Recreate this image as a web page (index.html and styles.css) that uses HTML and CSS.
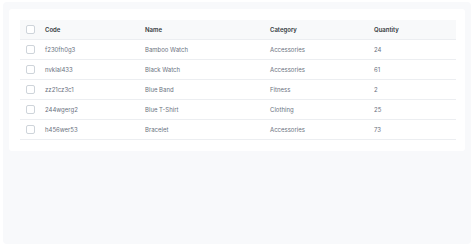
FILE: index.html
```html
<!DOCTYPE html>
<html>
<head>
<meta charset="utf-8">
<link rel="stylesheet" href="styles.css">
</head>
<body>
<div class="page">
  <div class="card">
    <table class="grid">
      <colgroup>
        <col class="c-check"><col class="c-code"><col class="c-name"><col class="c-cat"><col class="c-qty">
      </colgroup>
      <thead>
        <tr><th><span class="box"></span></th><th>Code</th><th>Name</th><th>Category</th><th>Quantity</th></tr>
      </thead>
      <tbody>
        <tr><td><span class="box"></span></td><td>f230fh0g3</td><td>Bamboo Watch</td><td>Accessories</td><td>24</td></tr>
        <tr><td><span class="box"></span></td><td>nvklal433</td><td>Black Watch</td><td>Accessories</td><td>61</td></tr>
        <tr><td><span class="box"></span></td><td>zz21cz3c1</td><td>Blue Band</td><td>Fitness</td><td>2</td></tr>
        <tr><td><span class="box"></span></td><td>244wgerg2</td><td>Blue T-Shirt</td><td>Clothing</td><td>25</td></tr>
        <tr><td><span class="box"></span></td><td>h456wer53</td><td>Bracelet</td><td>Accessories</td><td>73</td></tr>
      </tbody>
    </table>
  </div>
</div>
</body>
</html>
```
FILE: styles.css
```css
html, body { margin: 0; padding: 0; background: #ffffff; }
body { font-family: Inter, "Noto Sans", sans-serif; }
.page {
  margin: 2px 3px 0 3px;
  height: 242px;
  background: #f8f9fb;
  border-radius: 4px;
  padding: 7px 6px 0 6px;
  box-sizing: border-box;
}
.card {
  background: #ffffff;
  border-radius: 3px;
  padding: 11px 9px 11px 11px;
  width: 456px;
  box-sizing: border-box;
}
.grid {
  border-collapse: collapse;
  table-layout: fixed;
  width: 436px;
  font-size: 6px;
}
.c-check { width: 20px; }
.c-code { width: 100px; }
.c-name { width: 125px; }
.c-cat { width: 104px; }
.c-qty { width: 87px; }
.grid th, .grid td {
  height: 19px;
  padding: 0 0 0 5px;
  text-align: left;
  border-bottom: 1px solid #eceef1;
  white-space: nowrap;
  line-height: 8px;
  vertical-align: middle;
}
.grid th {
  background: #f8f9fa;
  color: #343a40;
  font-weight: 600;
}
.grid td { color: #6b7280; font-weight: 400; }
.grid th:first-child, .grid td:first-child { padding-left: 6px; }
.box {
  display: block;
  width: 7px;
  height: 7px;
  border: 1px solid #ced4da;
  border-radius: 2px;
  background: #fff;
}
```
